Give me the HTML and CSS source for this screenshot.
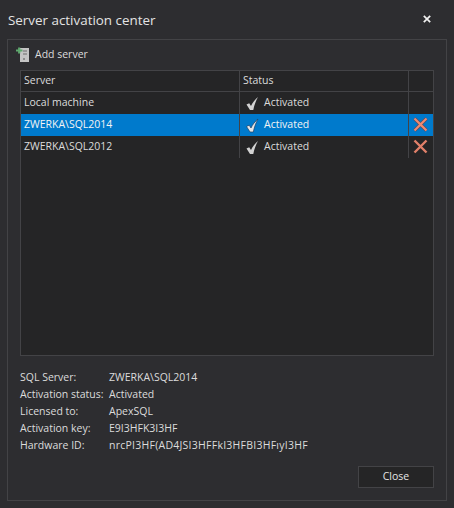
FILE: index.html
```html
<!DOCTYPE html>
<html lang="en">
<head>
    <meta charset="UTF-8">
    <title>Server activation center</title>
    <link rel="stylesheet" href="styles.css">
</head>
<body>
    <div class="title-bar">
        <span class="title">Server activation center</span>
        <svg class="close-x" width="10" height="10" viewBox="0 0 10 10"><path d="M1.8 1.8L8.2 8.2M8.2 1.8L1.8 8.2" stroke="#f1f1f1" stroke-width="1.7"/></svg>
    </div>
    <div class="panel">
        <div class="toolbar">
            <svg class="add-icon" width="13" height="15" viewBox="0 0 13 15">
                <path d="M4 1H13V15H4Z" fill="#c4c4c4"/>
                <path d="M7 4H11M7 7H11" stroke="#6d6d6d"/>
                <circle cx="8" cy="12" r="0.8" fill="#444"/>
                <path d="M0 3.5H6.5M3.2 0.5V6.5" stroke="#5fa86e" stroke-width="2.2"/>
            </svg>
            <span>Add server</span>
        </div>
        <div class="grid">
            <div class="row head">
                <div class="cell c-name">Server</div>
                <div class="cell c-status">Status</div>
                <div class="cell c-del"></div>
            </div>
            <div class="row">
                <div class="cell c-name">Local machine</div>
                <div class="cell c-status"><svg class="check" width="13" height="16" viewBox="0 0 13 16"><path d="M0.5 9.5L3.2 8.2L5 11C6.5 7.5 9 4.5 12 2C10 5.5 8.3 10 7.3 15H4Z" fill="#d2d2d2"/></svg>Activated</div>
                <div class="cell c-del"></div>
            </div>
            <div class="row selected">
                <div class="cell c-name">ZWERKA\SQL2014</div>
                <div class="cell c-status"><svg class="check" width="13" height="16" viewBox="0 0 13 16"><path d="M0.5 9.5L3.2 8.2L5 11C6.5 7.5 9 4.5 12 2C10 5.5 8.3 10 7.3 15H4Z" fill="#e6e6e6" stroke="#1c3f66" stroke-width="0.7"/></svg>Activated</div>
                <div class="cell c-del"><svg class="del" width="15" height="15" viewBox="0 0 15 15"><path d="M1.5 1.5L13.5 13.5M13.5 1.5L1.5 13.5" stroke="#5b4a5e" stroke-width="3.4"/><path d="M1.5 1.5L13.5 13.5M13.5 1.5L1.5 13.5" stroke="#ee8a72" stroke-width="2.2"/></svg></div>
            </div>
            <div class="row">
                <div class="cell c-name">ZWERKA\SQL2012</div>
                <div class="cell c-status"><svg class="check" width="13" height="16" viewBox="0 0 13 16"><path d="M0.5 9.5L3.2 8.2L5 11C6.5 7.5 9 4.5 12 2C10 5.5 8.3 10 7.3 15H4Z" fill="#d2d2d2"/></svg>Activated</div>
                <div class="cell c-del"><svg class="del" width="15" height="15" viewBox="0 0 15 15"><path d="M1.5 1.5L13.5 13.5M13.5 1.5L1.5 13.5" stroke="#e0806a" stroke-width="2.4"/></svg></div>
            </div>
        </div>
        <div class="details">
            <span>SQL Server:</span><span>ZWERKA\SQL2014</span>
            <span>Activation status:</span><span>Activated</span>
            <span>Licensed to:</span><span>ApexSQL</span>
            <span>Activation key:</span><span>E9I3HFK3I3HF</span>
            <span>Hardware ID:</span><span class="hw-id">nrcPI3HF(AD4JSI3HFFkI3HFBI3HFıyI3HF</span>
        </div>
        <div class="footer">
            <button class="close-btn">Close</button>
        </div>
    </div>
</body>
</html>
```

FILE: styles.css
```css
html, body {
    height: 100%;
}

body {
    margin: 0;
    background: #2d2d30;
    color: #dcdcdc;
    font-family: "Open Sans", "Noto Sans", sans-serif;
    font-size: 10.5px;
    box-sizing: border-box;
    padding: 0 7px 7px 7px;
    display: flex;
    flex-direction: column;
}

/* Title */
.title-bar {
    height: 39px;
    display: flex;
    align-items: center;
    justify-content: space-between;
    padding: 0 15px 0 1px;
}

.title {
    font-size: 13.4px;
    color: #e4e4e4;
}

.close-x {
    margin-bottom: 1px;
}

/* Panel */
.panel {
    flex: 1;
    border: 1px solid #434346;
    padding: 0 12px 12px 12px;
    display: flex;
    flex-direction: column;
}

.toolbar {
    height: 30px;
    display: flex;
    align-items: center;
    gap: 6px;
}

.toolbar span {
    margin-bottom: 3px;
}

.add-icon {
    margin-left: -4px;
    margin-bottom: 1px;
}

/* Server table */
.grid {
    height: 286px;
    box-sizing: border-box;
    border: 1px solid #434346;
    background: #252526;
}

.row {
    display: flex;
    height: 22px;
}

.row.head {
    height: 20px;
    border-bottom: 1px solid #434346;
}

.row.selected {
    background: #007acc;
    color: #f4f4f4;
}

.cell {
    display: flex;
    align-items: center;
    box-sizing: border-box;
    padding: 0 0 2px 3px;
}

.c-name {
    width: 219px;
    border-right: 1px solid #434346;
}

.c-status {
    width: 169px;
    border-right: 1px solid #434346;
}

.c-del {
    flex: 1;
    padding-left: 4px;
}

.check {
    margin: 1px 5px 0 3px;
}

.del {
    margin-top: 1px;
}

/* Details under the table */
.details {
    display: grid;
    grid-template-columns: 89px 1fr;
    grid-auto-rows: 17px;
    align-items: center;
    margin-top: 12px;
}

.hw-id {
    letter-spacing: 0.25px;
}

.footer {
    margin-top: auto;
    display: flex;
    justify-content: flex-end;
}

.close-btn {
    width: 76px;
    height: 22px;
    background: #252526;
    border: 1px solid #434346;
    color: #e4e4e4;
    font-family: inherit;
    font-size: 10.5px;
    padding: 0 0 2px;
}
```
